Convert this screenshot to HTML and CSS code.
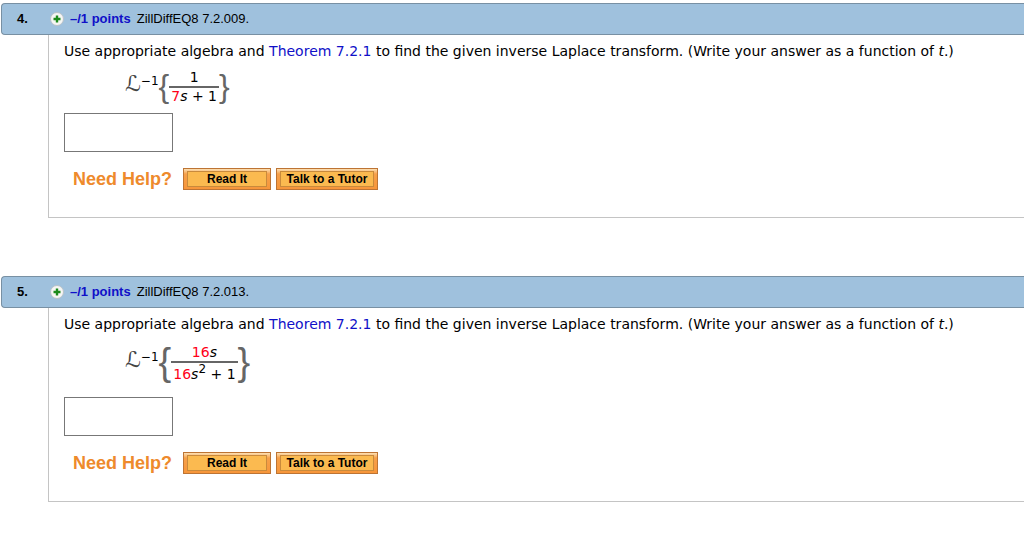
FILE: index.html
```html
<!DOCTYPE html>
<html lang="en">
<head>
<meta charset="utf-8">
<title>ZillDiffEQ8 7.2</title>
<link rel="stylesheet" href="styles.css">
</head>

<body>

<section class="question">
  <h2 class="bar">
    <span class="number">4.</span>
    <svg class="plus" viewBox="0 0 14 14" aria-hidden="true">
      <circle cx="7" cy="7" r="6.5" fill="#f6f6f4" stroke="#b9c2c8"/>
      <path d="M7 3.5v7M3.5 7h7" stroke="#1c8a1c" stroke-width="2.4"/>
    </svg>
    <a class="points" href="#points4">–/1 points</a>
    <span class="source">ZillDiffEQ8 7.2.009.</span>
  </h2>
  <div class="content" id="points4">
    <p>Use appropriate algebra and <a href="#theorem">Theorem 7.2.1</a> to find the given inverse Laplace transform. (Write your answer as a function of <i>t</i>.)</p>
    <div class="formula">
      <span class="script">ℒ</span><span class="power">−1</span>
      <span class="brace">{</span>
      <span class="fraction">
        <span class="top">1</span>
        <span class="bottom"><b>7</b><i>s</i> + 1</span>
      </span>
      <span class="brace">}</span>
    </div>
    <input class="answer" type="text" aria-label="Answer to question 4">
    <div class="help">
      <span class="label">Need Help?</span>
      <button class="read" type="button"><span>Read It</span></button>
      <button class="tutor" type="button"><span>Talk to a Tutor</span></button>
    </div>
  </div>
</section>

<section class="question">
  <h2 class="bar">
    <span class="number">5.</span>
    <svg class="plus" viewBox="0 0 14 14" aria-hidden="true">
      <circle cx="7" cy="7" r="6.5" fill="#f6f6f4" stroke="#b9c2c8"/>
      <path d="M7 3.5v7M3.5 7h7" stroke="#1c8a1c" stroke-width="2.4"/>
    </svg>
    <a class="points" href="#points5">–/1 points</a>
    <span class="source">ZillDiffEQ8 7.2.013.</span>
  </h2>
  <div class="content" id="points5">
    <p>Use appropriate algebra and <a href="#theorem">Theorem 7.2.1</a> to find the given inverse Laplace transform. (Write your answer as a function of <i>t</i>.)</p>
    <div class="formula tall">
      <span class="script">ℒ</span><span class="power">−1</span>
      <span class="brace">{</span>
      <span class="fraction">
        <span class="top"><b>16</b><i>s</i></span>
        <span class="bottom"><b>16</b><i>s</i><sup>2</sup> + 1</span>
      </span>
      <span class="brace">}</span>
    </div>
    <input class="answer" type="text" aria-label="Answer to question 5">
    <div class="help">
      <span class="label">Need Help?</span>
      <button class="read" type="button"><span>Read It</span></button>
      <button class="tutor" type="button"><span>Talk to a Tutor</span></button>
    </div>
  </div>
</section>

</body>
</html>
```

FILE: styles.css
```css
body {
  margin: 0;
  padding: 3px 0 0 1px;
  background: white;
  color: black;
  font-family: Verdana, "DejaVu Sans", sans-serif;
  font-size: 14px;
  line-height: 18px;
  overflow-x: hidden;
}

a {
  color: #1010c8;
  text-decoration: none;
}

.question {
  margin-bottom: 58px;
}

.bar {
  display: flex;
  align-items: center;
  box-sizing: border-box;
  height: 32px;
  margin: 0;
  border: 1px solid #7890a3;
  border-right: none;
  border-radius: 4px 0 0 4px;
  background: #9fc1dd;
  font: 13px/16px "Liberation Sans", Arial, sans-serif;
}

.number {
  width: 33px;
  padding-left: 15px;
  font-weight: bold;
}

.plus {
  width: 14px;
  height: 14px;
  margin-right: 6px;
}

.points {
  margin-right: 6px;
  font-weight: bold;
}

.content {
  margin-left: 47px;
  padding: 7px 0 27px 15px;
  border-left: 1px solid #c4c4c4;
  border-bottom: 1px solid #c4c4c4;
}

.content p {
  margin: 0;
  white-space: nowrap;
}

.formula {
  display: flex;
  align-items: center;
  height: 36px;
  margin: 9px 0 8px 61px;
}

.formula.tall {
  height: 42px;
  margin-bottom: 13px;
}

.formula b {
  color: #ff0018;
  font-weight: normal;
}

.script {
  padding-bottom: 6px;
  color: #444;
  font-size: 22px;
}

.power {
  padding-bottom: 12px;
  font-size: 12px;
}

.brace {
  padding-bottom: 3px;
  color: #666;
  font-family: "Liberation Sans", Arial, sans-serif;
  font-size: 32px;
  line-height: 32px;
}

.tall .brace {
  font-size: 38px;
}

.fraction {
  line-height: 17px;
  text-align: center;
}

.top,
.bottom {
  display: block;
  padding: 0 2px;
}

.bottom {
  border-top: 2px solid #666;
}

.tall .bottom {
  padding-top: 3px;
}

sup {
  font-size: 12px;
  line-height: 0;
}

.answer {
  display: block;
  box-sizing: border-box;
  width: 109px;
  height: 39px;
  border: 1px solid #777;
}

.help {
  display: flex;
  align-items: center;
  margin: 16px 0 0 9px;
}

.label {
  width: 110px;
  color: #ee8a2c;
  font: bold 18px/22px "Liberation Sans", Arial, sans-serif;
}

.help button {
  display: flex;
  height: 22px;
  margin: 0 5px 0 0;
  padding: 2px 3px;
  border: 1px solid #bd7434;
  background: linear-gradient(#fce0b4, #f6a04a 5px, #f7963a);
  font: bold 12px/15px "Liberation Sans", Arial, sans-serif;
}

.help button span {
  flex: 1;
  height: 14px;
  border: 1px solid #c98a3c;
  background: #fbba50;
}

.help .read {
  width: 88px;
}

.help .tutor {
  width: 102px;
}
```
